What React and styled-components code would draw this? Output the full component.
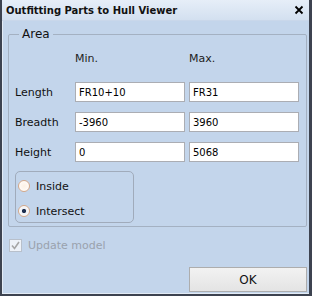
import React from 'react';
import styled, { createGlobalStyle } from 'styled-components';

const GlobalStyle = createGlobalStyle`
  html, body {
    margin: 0;
    padding: 0;
    background: #3d4350;
  }
  body {
    font-family: "DejaVu Sans", "Liberation Sans", sans-serif;
    font-size: 11px;
  }
`;

const App = () => {
  return (
    <Frame>
      <GlobalStyle />
      <TitleBar>
        <Title>Outfitting Parts to Hull Viewer</Title>
        <CloseIcon viewBox="0 0 10 10">
          <path d="M1.5 1.5 L8.5 8.5 M8.5 1.5 L1.5 8.5" stroke="#000" strokeWidth="1.8" />
        </CloseIcon>
      </TitleBar>
      <Body>
        <Group>
          <Legend>Area</Legend>
          <Grid>
            <span />
            <ColHead>Min.</ColHead>
            <ColHead>Max.</ColHead>
            <RowLabel>Length</RowLabel>
            <Field defaultValue="FR10+10" />
            <Field defaultValue="FR31" />
            <RowLabel>Breadth</RowLabel>
            <Field defaultValue="-3960" />
            <Field defaultValue="3960" />
            <RowLabel>Height</RowLabel>
            <Field defaultValue="0" />
            <Field defaultValue="5068" />
          </Grid>
          <RadioBox>
            <RadioRow>
              <Radio />
              <span>Inside</span>
            </RadioRow>
            <RadioRow>
              <Radio $checked />
              <span>Intersect</span>
            </RadioRow>
          </RadioBox>
        </Group>
        <CheckRow>
          <CheckBox>
            <svg width="9" height="9" viewBox="0 0 9 9">
              <path d="M1 4.5 L3.5 7.5 L8 1" fill="none" stroke="#a6a6a6" strokeWidth="1.6" />
            </svg>
          </CheckBox>
          <span>Update model</span>
        </CheckRow>
        <Footer>
          <Button>OK</Button>
        </Footer>
      </Body>
    </Frame>
  );
};

const Frame = styled.div`
  width: 312px;
  height: 296px;
  box-sizing: border-box;
  border: 2px solid #3d4350;
  border-right-width: 3px;
  border-top: none;
  display: flex;
  flex-direction: column;
  background: #c3d5eb;
`;

const TitleBar = styled.div`
  height: 20px;
  flex: none;
  display: flex;
  align-items: center;
  justify-content: space-between;
  padding: 0 5px 0 4px;
  background: linear-gradient(#e6eef8, #d3e0f0);
  border-bottom: 1px solid #c9d7ea;
`;

const Title = styled.div`
  font-weight: bold;
  font-size: 10px;
  color: #111;
`;

const CloseIcon = styled.svg`
  width: 10px;
  height: 10px;
`;

const Body = styled.div`
  flex: 1;
  display: flex;
  flex-direction: column;
  padding: 6px 2px 1px 5px;
  border-left: 1px solid #e3ebf5;
  border-bottom: 1px solid #e3ebf5;
`;

const Group = styled.fieldset`
  margin: 0;
  padding: 0 6px 7px 7px;
  border: 1px solid #a4b1c2;
  border-radius: 2px;
  height: 200px;
  box-sizing: border-box;
`;

const Legend = styled.legend`
  padding: 0 3px;
  margin-left: 3px;
  font-size: 12px;
  color: #111;
`;

const Grid = styled.div`
  display: grid;
  grid-template-columns: 56px 110px 110px;
  grid-template-rows: 18px repeat(3, 20px);
  row-gap: 10px;
  column-gap: 4px;
  align-items: center;
  margin-top: 13px;
  margin-left: -1px;
`;

const ColHead = styled.div`
  color: #222;
  align-self: start;
  margin-top: -2px;
`;

const RowLabel = styled.div`
  color: #111;
  padding-top: 1px;
`;

const Field = styled.input`
  box-sizing: border-box;
  height: 20px;
  width: 100%;
  border: 1px solid #abadb3;
  background: #fff;
  padding: 0 3px;
  font-family: "DejaVu Sans", sans-serif;
  font-size: 10px;
  color: #000;
  outline: none;
`;

const RadioBox = styled.div`
  margin-top: 9px;
  margin-left: -1px;
  width: 119px;
  height: 52px;
  box-sizing: border-box;
  border: 1px solid #a0abbb;
  border-radius: 5px;
  display: flex;
  flex-direction: column;
  gap: 13px;
  padding: 8px 0 0 2px;
`;

const RadioRow = styled.div`
  display: flex;
  align-items: center;
  gap: 6px;
  height: 12px;
  color: #111;
`;

const Radio = styled.span`
  width: 12px;
  height: 12px;
  box-sizing: border-box;
  border-radius: 50%;
  border: 1px solid #d3a88a;
  background: ${(p) =>
    p.$checked
      ? 'radial-gradient(circle, #1f3050 0 1.8px, #eef0f4 2.4px, #fff 6px)'
      : 'radial-gradient(circle, #fdf1e4, #fff)'};
`;

const CheckRow = styled.div`
  display: flex;
  align-items: center;
  gap: 6px;
  margin-top: 12px;
  margin-left: 1px;
  color: #9aa2ad;
`;

const CheckBox = styled.span`
  width: 13px;
  height: 13px;
  box-sizing: border-box;
  border: 1px solid #b8c0cb;
  background: #eef2f8;
  display: flex;
  align-items: center;
  justify-content: center;
`;

const Footer = styled.div`
  margin-top: auto;
  display: flex;
  justify-content: flex-end;
`;

const Button = styled.button`
  width: 118px;
  height: 25px;
  border: 1px solid #adadad;
  background: linear-gradient(#f2f2f2, #e4e4e4);
  font-family: "DejaVu Sans", sans-serif;
  font-size: 12px;
  color: #111;
  padding: 0;
`;

export default App;
